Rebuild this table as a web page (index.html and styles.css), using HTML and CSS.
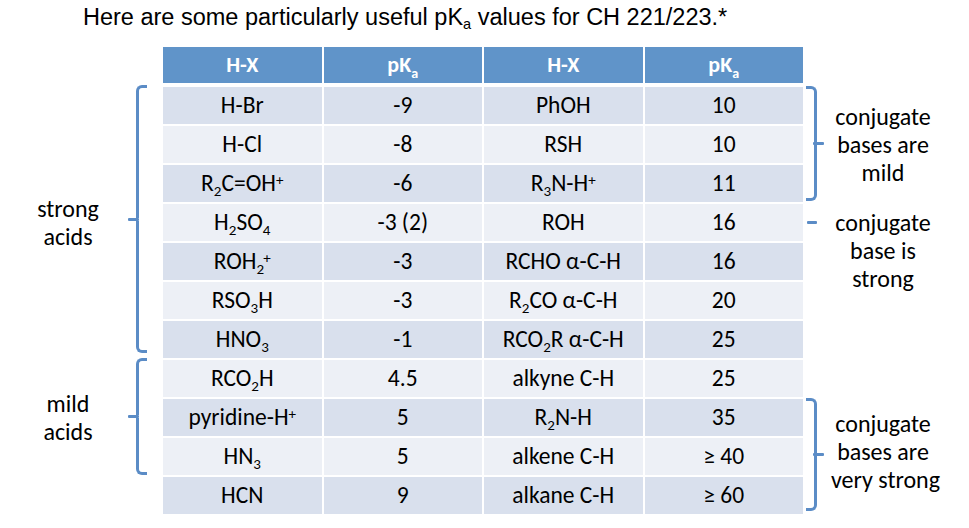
FILE: index.html
```html
<!DOCTYPE html>
<html>
<head>
<meta charset="utf-8">
<link rel="stylesheet" href="styles.css">
</head>
<body>
<p class="title">Here are some particularly useful pK<sub>a</sub> values for CH 221/223.*</p>
<div class="grid">
  <div class="hd c1">H-X</div>
  <div class="hd c2">pK<sub>a</sub></div>
  <div class="hd c3">H-X</div>
  <div class="hd c4">pK<sub>a</sub></div>

  <div class="cell odd">H-Br</div><div class="cell odd">-9</div><div class="cell odd">PhOH</div><div class="cell odd">10</div>
  <div class="cell even">H-Cl</div><div class="cell even">-8</div><div class="cell even">RSH</div><div class="cell even">10</div>
  <div class="cell odd">R<sub>2</sub>C=OH<sup>+</sup></div><div class="cell odd">-6</div><div class="cell odd">R<sub>3</sub>N-H<sup>+</sup></div><div class="cell odd">11</div>
  <div class="cell even">H<sub>2</sub>SO<sub>4</sub></div><div class="cell even">-3 (2)</div><div class="cell even">ROH</div><div class="cell even">16</div>
  <div class="cell odd">ROH<sub>2</sub><sup class="sp">+</sup></div><div class="cell odd">-3</div><div class="cell odd">RCHO α-C-H</div><div class="cell odd">16</div>
  <div class="cell even">RSO<sub>3</sub>H</div><div class="cell even">-3</div><div class="cell even">R<sub>2</sub>CO α-C-H</div><div class="cell even">20</div>
  <div class="cell odd">HNO<sub>3</sub></div><div class="cell odd">-1</div><div class="cell odd">RCO<sub>2</sub>R α-C-H</div><div class="cell odd">25</div>
  <div class="cell even">RCO<sub>2</sub>H</div><div class="cell even">4.5</div><div class="cell even">alkyne C-H</div><div class="cell even">25</div>
  <div class="cell odd">pyridine-H<sup>+</sup></div><div class="cell odd">5</div><div class="cell odd">R<sub>2</sub>N-H</div><div class="cell odd">35</div>
  <div class="cell even">HN<sub>3</sub></div><div class="cell even">5</div><div class="cell even">alkene C-H</div><div class="cell even">≥ 40</div>
  <div class="cell odd">HCN</div><div class="cell odd">9</div><div class="cell odd">alkane C-H</div><div class="cell odd">≥ 60</div>

  <div class="lbl-l strong">strong<br>acids</div>
  <div class="brace-l strong-b"><div class="bt"></div><div class="tick"></div><div class="bb"></div></div>
  <div class="lbl-l mild">mild<br>acids</div>
  <div class="brace-l mild-b"><div class="bt"></div><div class="tick"></div><div class="bb"></div></div>

  <div class="brace-r r1"><div class="bt"></div><div class="tick"></div><div class="bb"></div></div>
  <div class="lbl-r l1">conjugate<br>bases are<br>mild</div>
  <div class="dash"></div>
  <div class="lbl-r l2">conjugate<br>base is<br>strong</div>
  <div class="brace-r r2"><div class="bt"></div><div class="tick"></div><div class="bb"></div></div>
  <div class="lbl-r l3">conjugate<br>bases are<br>very strong</div>
</div>
</body>
</html>
```
FILE: styles.css
```css
html, body {
  margin: 0;
  padding: 0;
  background: #ffffff;
}

.title {
  margin: 0;
  padding: 3px 0 0 83px;
  font-family: "Liberation Sans", Arial, sans-serif;
  font-size: 23.5px;
  line-height: 28px;
  color: #000;
  white-space: nowrap;
}

.title sub {
  font-size: 0.62em;
  line-height: 0;
  vertical-align: -0.3em;
}

.grid {
  margin-top: 16px;
  display: grid;
  grid-template-columns: 121px 38px repeat(4, 158.5px) 24px 104px;
  grid-template-rows: 38px repeat(11, 37px);
  gap: 2px;
  font-family: Carlito, Calibri, Lato, "Open Sans", sans-serif;
  color: #000;
}

.hd {
  grid-row: 1;
  height: 36px;
  align-self: start;
  background: #6094c9;
  color: #fff;
  font-weight: bold;
  font-size: 22px;
  line-height: 36px;
  text-align: center;
}

.hd sub { vertical-align: -0.42em; }

.c1 { grid-column: 3; }
.c2 { grid-column: 4; }
.c3 { grid-column: 5; }
.c4 { grid-column: 6; }

.cell {
  text-align: center;
  font-size: 23.5px;
  line-height: 37px;
  white-space: nowrap;
}

.cell:nth-child(4n+1) { grid-column: 3; }

.odd { background: #d9e0ed; }
.even { background: #edf0f6; }

sub, sup {
  font-size: 0.64em;
  line-height: 0;
}

sub { vertical-align: -0.32em; }
sup { vertical-align: 0.42em; }
sup.sp { margin-left: -0.05em; }

.lbl-l {
  grid-column: 1;
  align-self: center;
  text-align: center;
  padding-left: 15px;
  font-size: 24px;
  line-height: 28px;
}

.strong { grid-row: 2 / 9; }
.mild { grid-row: 9 / 12; }

.brace-l, .brace-r {
  display: flex;
  flex-direction: column;
}

.brace-l { grid-column: 2; }
.strong-b { grid-row: 2 / 9; margin: -2px 0 5px 0; }
.mild-b { grid-row: 9 / 12; margin: -2px 0 0 0; }

.brace-l .bt, .brace-l .bb, .brace-r .bt, .brace-r .bb {
  flex: 1;
  border: 0 solid #5b8cc6;
  width: 8px;
}

.brace-l .bt {
  margin-left: 13px;
  border-left-width: 3px;
  border-top-width: 3px;
  border-top-left-radius: 6px;
}

.brace-l .bb {
  margin-left: 13px;
  border-left-width: 3px;
  border-bottom-width: 3px;
  border-bottom-left-radius: 6px;
}

.brace-l .tick {
  height: 3px;
  width: 11px;
  margin-left: 5px;
  background: #5b8cc6;
  border-radius: 1px;
}

.brace-r { grid-column: 7; }
.r1 { grid-row: 2 / 5; margin: -1px 0 1px 0; }
.r2 { grid-row: 10 / 13; margin: -1px 0 3px 0; }

.brace-r .bt {
  margin-left: 1px;
  border-right-width: 3px;
  border-top-width: 3px;
  border-top-right-radius: 6px;
}

.brace-r .bb {
  margin-left: 1px;
  border-right-width: 3px;
  border-bottom-width: 3px;
  border-bottom-right-radius: 6px;
}

.brace-r .tick {
  height: 3px;
  width: 11px;
  margin-left: 8px;
  background: #5b8cc6;
  border-radius: 1px;
}

.dash {
  grid-column: 7;
  grid-row: 5;
  align-self: center;
  height: 3px;
  width: 10px;
  margin-left: 2px;
  background: #5b8cc6;
  border-radius: 1px;
}

.lbl-r {
  grid-column: 8;
  text-align: center;
  font-size: 24px;
  line-height: 28px;
  white-space: nowrap;
}

.l1 { grid-row: 2 / 5; align-self: center; }
.l2 { grid-row: 5 / 8; align-self: start; padding-top: 5px; }
.l3 { grid-row: 10 / 13; align-self: center; margin-top: -10px; }
```
